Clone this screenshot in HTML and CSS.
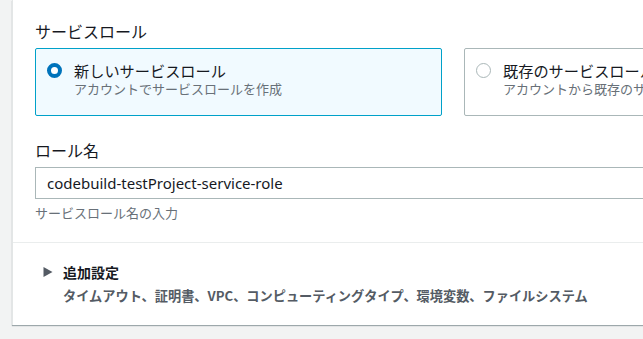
FILE: index.html
```html
<!DOCTYPE html>
<html lang="ja">
<head>
<meta charset="utf-8">
<link rel="stylesheet" href="styles.css">
</head>
<body>
<div class="page">
  <div class="card">
    <div class="main">
      <div class="field">
        <div class="label">サービスロール</div>
        <div class="tiles">
          <div class="tile selected">
            <span class="radio checked"></span>
            <div class="tile-text">
              <div class="tile-title">新しいサービスロール</div>
              <div class="tile-desc">アカウントでサービスロールを作成</div>
            </div>
          </div>
          <div class="tile">
            <span class="radio"></span>
            <div class="tile-text">
              <div class="tile-title">既存のサービスロール</div>
              <div class="tile-desc">アカウントから既存のサービスロールを選択</div>
            </div>
          </div>
        </div>
      </div>
      <div class="field role">
        <div class="label">ロール名</div>
        <div class="input">codebuild-testProject-service-role</div>
        <div class="hint">サービスロール名の入力</div>
      </div>
    </div>
    <div class="expander">
      <div class="exp-head">
        <svg class="caret" width="10" height="10" viewBox="0 0 10 10"><path d="M0.5 0 L9.5 5 L0.5 10 Z" fill="#545b64"/></svg>
        <span class="exp-title">追加設定</span>
      </div>
      <div class="exp-desc">タイムアウト、証明書、VPC、コンピューティングタイプ、環境変数、ファイルシステム</div>
    </div>
  </div>
</div>
</body>
</html>
```

FILE: styles.css
```css
html, body {
  margin: 0;
  padding: 0;
  background: #f2f3f3;
  overflow: hidden;
  width: 643px;
  height: 339px;
}
body {
  font-family: "Noto Sans", "Noto Sans CJK JP", sans-serif;
  color: #16191f;
}
.page {
  padding-left: 12px;
  padding-bottom: 3px;
  width: 631px;
  overflow: hidden;
}
.card {
  width: 720px;
  background: #fff;
  border-left: 1px solid #e3e6e6;
  box-shadow: 0 1px 1px 0 rgba(0, 28, 36, 0.35);
  height: 325px;
  box-sizing: border-box;
  display: flex;
  flex-direction: column;
}
.main {
  padding: 20px 0 0 22px;
  border-bottom: 1px solid #eaeded;
  height: 243px;
  box-sizing: border-box;
}
.label {
  font-size: 16px;
  line-height: 22px;
  font-family: "Noto Sans CJK JP", sans-serif;
  color: #16191f;
}
.tiles {
  display: flex;
  gap: 22px;
  margin-top: 6px;
}
.tile {
  width: 407px;
  height: 68px;
  box-sizing: border-box;
  border: 1px solid #aab7b8;
  border-radius: 2px;
  display: flex;
  align-items: flex-start;
  padding: 11px 0 0 11px;
  flex-shrink: 0;
  overflow: hidden;
}
.tile.selected {
  border-color: #00a1c9;
  background: #f1faff;
}
.radio {
  width: 15px;
  height: 15px;
  box-sizing: border-box;
  border-radius: 50%;
  border: 1px solid #aab7b8;
  background: #fff;
  margin-top: 3px;
  flex-shrink: 0;
}
.radio.checked {
  border: 4px solid #0073bb;
}
.tile-text {
  margin-left: 12px;
  font-family: "Noto Sans CJK JP", sans-serif;
  white-space: nowrap;
}
.tile-title {
  font-size: 15.2px;
  line-height: 20px;
  color: #16191f;
}
.tile-desc {
  font-size: 13px;
  line-height: 17px;
  color: #687078;
}
.role {
  margin-top: 23px;
}
.input {
  margin-top: 6px;
  height: 32px;
  box-sizing: border-box;
  border: 1px solid #aab7b8;
  border-right: none;
  padding-left: 11px;
  font-size: 15px;
  line-height: 30px;
  color: #16191f;
  font-family: "Noto Sans", sans-serif;
}
.hint {
  margin-top: 5px;
  font-size: 13px;
  line-height: 18px;
  color: #687078;
  font-family: "Noto Sans CJK JP", sans-serif;
}
.expander {
  padding: 19px 0 0 30px;
  font-family: "Noto Sans CJK JP", sans-serif;
}
.exp-head {
  display: flex;
  align-items: center;
}
.caret {
  display: block;
  margin-right: 10px;
}
.exp-title {
  font-size: 14px;
  line-height: 20px;
  font-weight: bold;
  color: #16191f;
}
.exp-desc {
  margin-left: 20px;
  margin-top: 5px;
  font-size: 13.2px;
  line-height: 18px;
  font-weight: bold;
  color: #545b64;
}
```
